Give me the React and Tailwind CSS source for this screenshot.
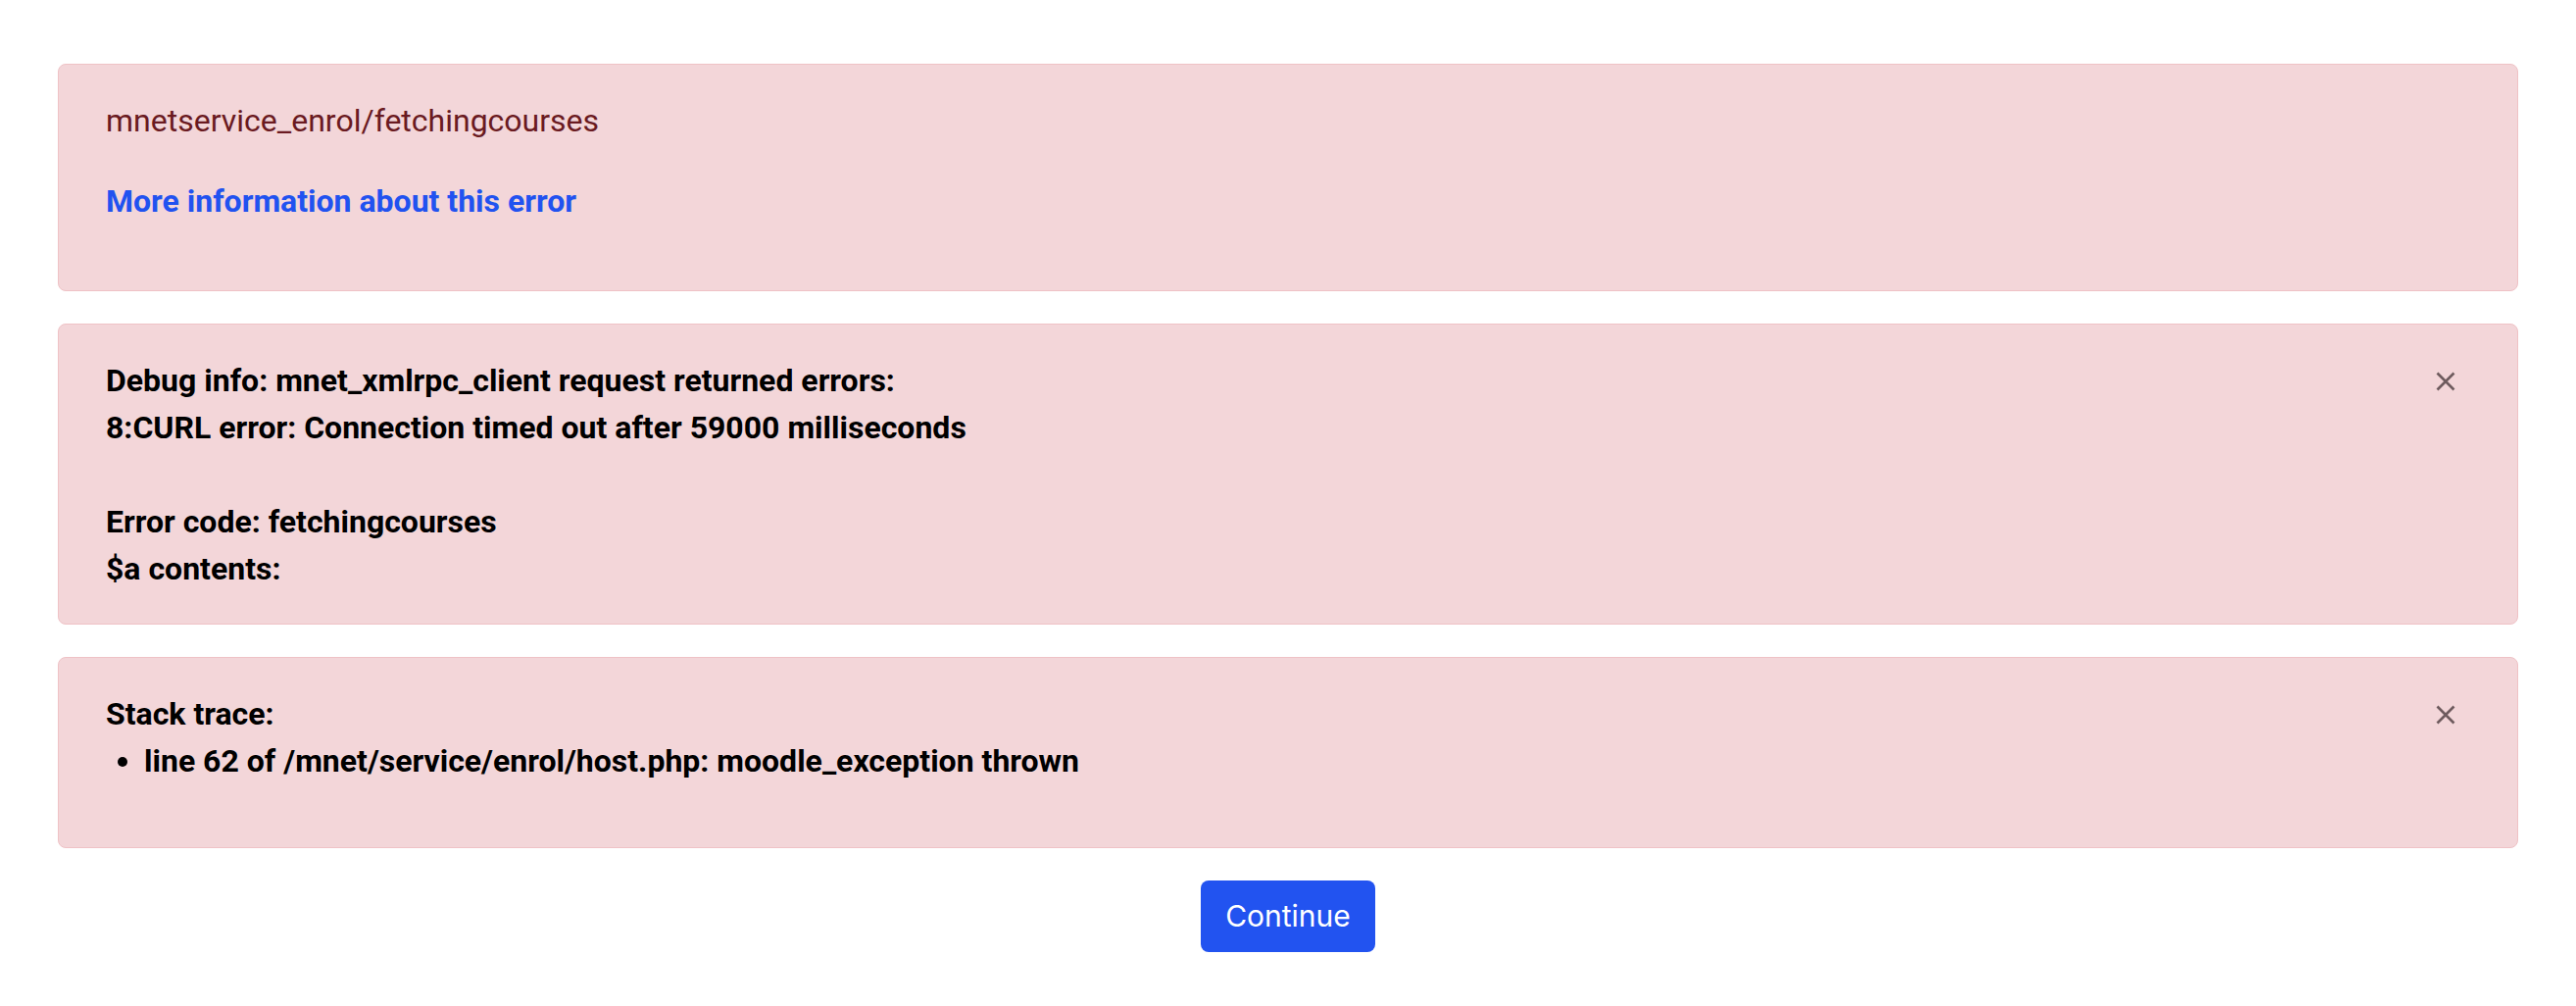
function CloseButton() {
  return (
    <button
      type="button"
      aria-label="Close"
      className="absolute right-[60px] top-[45px] flex h-[26px] w-[26px] items-center justify-center text-[#6e5b5e]"
    >
      <svg width="20" height="20" viewBox="0 0 20 20" fill="none">
        <path d="M1.5 1.5 L18.5 18.5 M18.5 1.5 L1.5 18.5" stroke="currentColor" strokeWidth="2.6" />
      </svg>
    </button>
  );
}

export default function App() {
  return (
    <div
      className="min-h-[1026px] bg-white px-[59px] pt-[65px] text-[32px] leading-[48px]"
      style={{ fontFamily: "Roboto, 'Noto Sans', sans-serif" }}
    >
      <div className="rounded-[8px] border border-[#efc2c6] bg-[#f3d6d9] px-[48px] py-[33px] text-[#6a1a21]">
        <p className="mb-[34px]">mnetservice_enrol/fetchingcourses</p>
        <p className="mb-[34px]">
          <a href="#" className="font-bold text-[#2152f0]">
            More information about this error
          </a>
        </p>
      </div>

      <div className="relative mt-[33px] rounded-[8px] border border-[#efc2c6] bg-[#f3d6d9] px-[48px] pt-[33px] pb-[32px] font-bold text-black">
        <CloseButton />
        <p>
          Debug info: mnet_xmlrpc_client request returned errors:
          <br />
          8:CURL error: Connection timed out after 59000 milliseconds
          <br />
          <br />
          Error code: fetchingcourses
          <br />
          $a contents:
        </p>
      </div>

      <div className="relative mt-[33px] rounded-[8px] border border-[#efc2c6] bg-[#f3d6d9] px-[48px] py-[33px] font-bold text-black">
        <CloseButton />
        <p>Stack trace:</p>
        <ul className="mb-[31px] list-disc pl-[39px]">
          <li>line 62 of /mnet/service/enrol/host.php: moodle_exception thrown</li>
        </ul>
      </div>

      <div className="mt-[33px] flex justify-center">
        <button
          type="button"
          className="rounded-[8px] bg-[#2253f0] px-[25px] py-[14px] text-[30px] leading-[45px] text-white"
          style={{ fontFamily: "Inter, 'Noto Sans', sans-serif" }}
        >
          Continue
        </button>
      </div>
    </div>
  );
}
